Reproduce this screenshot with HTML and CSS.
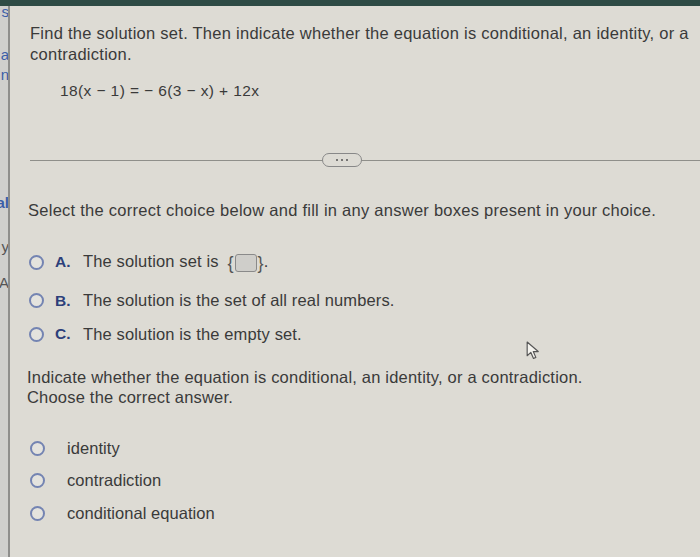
FILE: index.html
```html
<!DOCTYPE html>
<html>
<head>
<meta charset="utf-8">
<link rel="stylesheet" href="styles.css">
</head>
<body>
<div class="topbar"></div>
<div class="frame">
  <div class="side">
    <span class="frag f1">s</span>
    <span class="frag f2">a</span>
    <span class="frag f3">n</span>
    <span class="frag f4">al</span>
    <span class="frag f5 dark">y</span>
    <span class="frag f6 dark">A</span>
  </div>
  <div class="main">
    <div class="question">
      <p class="prompt">Find the solution set. Then indicate whether the equation is conditional, an identity, or a contradiction.</p>
      <p class="equation">18(x − 1) = − 6(3 − x) + 12x</p>
    </div>
    <div class="divider">
      <span class="more"><i></i><i></i><i></i></span>
    </div>
    <p class="instruct">Select the correct choice below and fill in any answer boxes present in your choice.</p>
    <ul class="choices">
      <li class="ca"><span class="radio"></span><span class="letter">A.</span><span class="ctext">The solution set is <span class="set"><span class="brace">{</span><span class="box"></span><span class="brace">}</span></span>.</span></li>
      <li class="cb"><span class="radio"></span><span class="letter">B.</span><span class="ctext">The solution is the set of all real numbers.</span></li>
      <li class="cc"><span class="radio"></span><span class="letter">C.</span><span class="ctext">The solution is the empty set.</span></li>
    </ul>
    <p class="instruct2">Indicate whether the equation is conditional, an identity, or a contradiction.<br>Choose the correct answer.</p>
    <ul class="answers">
      <li><span class="radio"></span><span class="atext">identity</span></li>
      <li><span class="radio"></span><span class="atext">contradiction</span></li>
      <li><span class="radio"></span><span class="atext">conditional equation</span></li>
    </ul>
    <svg class="cursor" width="15" height="19" viewBox="0 0 14 18"><path d="M1 1 L1 14 L4.5 10.8 L7 16.5 L9.2 15.5 L6.8 10 L11.5 10 Z" fill="#f4f3ee" stroke="#555" stroke-width="1.1" stroke-linejoin="round"/></svg>
  </div>
</div>
</body>
</html>
```

FILE: styles.css
```css
html, body {
  margin: 0;
  padding: 0;
  background: #dddbd4;
  font-family: "Liberation Sans", Arial, sans-serif;
  color: #3a3a3a;
  overflow: hidden;
}
.topbar {
  height: 6px;
  background: #2e4b45;
}
.frame {
  display: flex;
  height: 551px;
}
.side {
  width: 8px;
  flex: none;
  background: #cfcfcd;
  border-right: 2px solid #8e8e8c;
  overflow: hidden;
  display: flex;
  flex-direction: column;
  align-items: flex-end;
  font-size: 15px;
  color: #3b5ea8;
  line-height: 14px;
}
.frag { display: block; margin-right: -1px; }
.frag.dark { color: #555; }
.f1 { margin-top: -1px; }
.f2 { margin-top: 29px; }
.f3 { margin-top: 6px; }
.f4 { margin-top: 114px; font-weight: bold; }
.f5 { margin-top: 30px; }
.f6 { margin-top: 22px; }
.main {
  flex: 1;
  padding-left: 18px;
  background: #dddbd4;
  position: relative;
}
p { margin: 0; }
.question { padding-top: 17px; }
.prompt {
  font-size: 16.5px;
  line-height: 21px;
  letter-spacing: 0.26px;
  margin-left: 2px;
}
.equation {
  font-size: 15.5px;
  line-height: 18px;
  margin-top: 17px;
  padding-left: 32px;
  letter-spacing: 0.4px;
  word-spacing: 0;
}
.divider {
  margin-top: 60px;
  margin-left: 2px;
  height: 1px;
  background: #8f8f8a;
  position: relative;
}
.more {
  position: absolute;
  left: 292px;
  top: -7px;
  width: 38px;
  height: 12px;
  border: 1px solid #888;
  border-radius: 7px;
  background: #dddbd4;
  display: flex;
  justify-content: center;
  align-items: center;
  gap: 3px;
}
.more i {
  width: 2px;
  height: 2px;
  background: #555;
  border-radius: 1px;
}
.instruct {
  margin-top: 39px;
  font-size: 16.5px;
  line-height: 20px;
  letter-spacing: 0.26px;
}
ul { list-style: none; margin: 0; padding: 0; }
.choices { margin-top: 21px; }
.choices li {
  display: flex;
  align-items: center;
  font-size: 16.5px;
}
.choices .ca { height: 42px; }
.choices .cb { height: 35px; }
.choices .cc { height: 32px; }
.radio {
  width: 11px;
  height: 11px;
  border: 2px solid #7484b2;
  border-radius: 50%;
  flex: none;
  background: #e4e3de;
}
.choices .radio { margin-left: 1px; }
.letter {
  margin-left: 11px;
  width: 28px;
  font-weight: bold;
  color: #2c3f7a;
  font-size: 15.5px;
}
.ctext { letter-spacing: 0.14px; }
.set {
  display: inline-flex;
  align-items: center;
  vertical-align: middle;
  margin-left: 4px;
}
.brace { color: #555; font-size: 18px; line-height: 18px; }
.box {
  width: 20px;
  height: 16px;
  border: 1px solid #8a8a8a;
  border-radius: 3px;
  background: #cfceca;
  margin: 0 1px;
}
.cursor {
  position: absolute;
  left: 516px;
  top: 335px;
  display: block;
}
.instruct2 {
  margin-top: 18px;
  font-size: 16.5px;
  line-height: 19.5px;
  letter-spacing: 0.2px;
  margin-left: -1px;
}
.answers { margin-top: 25px; }
.answers li {
  display: flex;
  align-items: center;
  height: 32.5px;
  font-size: 16.5px;
  letter-spacing: 0.05px;
}
.answers .radio { margin-left: 2px; }
.atext { margin-left: 22px; }
```
